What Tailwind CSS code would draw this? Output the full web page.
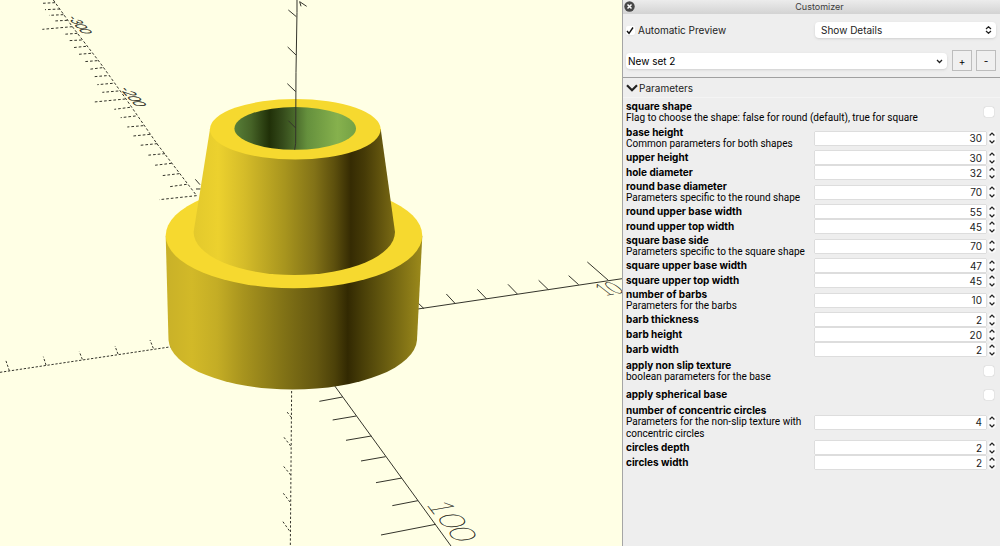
<!DOCTYPE html>
<html lang="en">
<head>
  <meta charset="UTF-8" />
  <meta name="viewport" content="width=device-width, initial-scale=1.0" />
  <title>Customizer</title>
  <script src="https://cdn.jsdelivr.net/npm/@tailwindcss/browser@4"></script>
</head>
<body class="flex h-screen overflow-hidden bg-[#ffffe5] font-[Inter,sans-serif] text-[10px] leading-[12px] text-[#1c1c1c]">

  <!-- 3D VIEW -->
  <main class="min-w-0 flex-1 bg-[#ffffe5]">
    <svg class="block h-full w-full" viewBox="0 0 622 546" preserveAspectRatio="xMidYMid slice" role="img" aria-label="3D preview">
      <defs>
        <linearGradient id="base" gradientUnits="userSpaceOnUse" x1="166" y1="0" x2="422" y2="0">
          <stop offset="0" stop-color="#c9b128" />
          <stop offset=".1" stop-color="#d2b928" />
          <stop offset=".2" stop-color="#c4ad25" />
          <stop offset=".3" stop-color="#a8941e" />
          <stop offset=".46" stop-color="#817216" />
          <stop offset=".59" stop-color="#645710" />
          <stop offset=".66" stop-color="#4c4109" />
          <stop offset=".71" stop-color="#322902" />
          <stop offset=".77" stop-color="#493f08" />
          <stop offset=".85" stop-color="#65590f" />
          <stop offset="1" stop-color="#9c8a1b" />
        </linearGradient>
        <linearGradient id="cone" gradientUnits="userSpaceOnUse" x1="194" y1="0" x2="395" y2="0">
          <stop offset="0" stop-color="#e3c92c" />
          <stop offset=".12" stop-color="#ecd12e" />
          <stop offset=".25" stop-color="#d5bc29" />
          <stop offset=".45" stop-color="#a8951e" />
          <stop offset=".6" stop-color="#827217" />
          <stop offset=".7" stop-color="#5c4f0d" />
          <stop offset=".78" stop-color="#352b03" />
          <stop offset=".85" stop-color="#463b07" />
          <stop offset="1" stop-color="#7b6b14" />
        </linearGradient>
        <linearGradient id="hole" gradientUnits="userSpaceOnUse" x1="234" y1="0" x2="356" y2="0">
          <stop offset="0" stop-color="#598039" />
          <stop offset=".14" stop-color="#466327" />
          <stop offset=".29" stop-color="#203008" />
          <stop offset=".4" stop-color="#354b1b" />
          <stop offset=".5" stop-color="#4a6a2b" />
          <stop offset=".6" stop-color="#65903d" />
          <stop offset=".85" stop-color="#86b14d" />
          <stop offset="1" stop-color="#74a145" />
        </linearGradient>
      </defs>

      <!-- axes behind the part -->
      <g fill="none" stroke="#33332a" stroke-width="3">
        <g transform="translate(40 0) scale(.3333)" stroke-dasharray="8 6">
          <path d="M40 0L97 80L183 192L258 297L350 430L470 587" />
          <path d="M45 8L5 10M60 27L15 29M70 44L27 46M82 61L42 63M97 80L7 88M112 100L70 103M125 120L85 122M138 139L98 143M153 160L115 163M172 182L132 185M187 203L147 208M200 227L163 230M218 250L172 254M235 273L187 277M256 297L163 306M270 322L223 328M287 348L242 353M310 377L262 381M330 403L280 408M352 431L300 436M375 461L320 466M395 490L343 496M418 521L366 527M440 553L390 560M470 587L358 599" />
          <path d="M466 538L480 554M468 567H482" stroke-dasharray="none" />
        </g>
        <g transform="translate(0 330) scale(.3333)" stroke-dasharray="7 5">
          <path d="M0 127L515 50M28 122L17 90M138 105L130 80M247 88L238 65M354 72L345 48M460 55L450 30" />
        </g>
        <g transform="translate(400 250) scale(.3333)">
          <path d="M40 179L667 86M72 176L50 155M165 160L139 132M260 147L232 118M352 132L324 103M445 119L416 91M536 104L506 77M625 91L562 36" />
        </g>
        <g transform="translate(270 380) scale(.3333)">
          <path d="M65 20L61 498M64 112L48 92M62 198L42 172M62 285L40 258M60 366L40 340M58 452L38 424" stroke-dasharray="7 6" />
          <path d="M190 12L543 498M218 51L148 64M259 108L188 120M304 168L228 181M347 230L273 243M396 294L318 308M444 362L367 377M497 433L333 465" />
        </g>
      </g>

      <!-- axis labels -->
      <g class="font-[Lato,sans-serif]" fill="#33332a" stroke="#33332a" stroke-width=".4" text-anchor="middle">
        <text font-size="29" y="10" class="font-thin" transform="translate(452 521) rotate(52) skewX(-28)">100</text>
        <text font-size="18" y="6" class="font-thin" transform="translate(609 289) rotate(-10) skewX(42)">10</text>
        <text font-size="12" y="5" class="font-light" transform="translate(134 97) rotate(47) skewX(-42)">-200</text>
        <text font-size="11" y="4" class="font-light" transform="translate(80 25) rotate(47) skewX(-42)">-300</text>
      </g>

      <!-- part -->
      <path d="M165.700 236L168.500 340A124.300 51 0 0 0 417 340L422.300 236Z" fill="url(#base)" />
      <ellipse cx="294" cy="235.500" rx="128.300" ry="52.700" fill="#f6d92f" />
      <path d="M210 129L193.600 232A100.700 43 0 0 0 395 232L380.700 129Z" fill="url(#cone)" />
      <ellipse cx="295.300" cy="129.300" rx="85.400" ry="30.300" fill="#f6d92f" />
      <ellipse cx="295.200" cy="128.400" rx="60.800" ry="21.400" fill="url(#hole)" />

      <!-- z axis in front -->
      <g transform="translate(260 0) scale(.3333)" fill="none" stroke="#33332a" stroke-width="3">
        <path d="M111 0V37L108 218L107 430L104 449M109 50L85 30M108 165L83 141M107 275L82 251M107 384L85 362M140 19L119 5M119 5L123 19" />
      </g>
    </svg>
  </main>

  <!-- CUSTOMIZER -->
  <aside class="flex w-[378px] shrink-0 flex-col border-l border-[#a5a5a5] bg-[#eeeeee]">
    <header class="relative flex h-[14px] items-center justify-center bg-linear-to-b from-[#ececec] to-[#d3d3d3]">
      <button aria-label="Close" class="absolute left-px top-px">
        <svg class="block size-[11px]" viewBox="0 0 11 11"><circle cx="5.500" cy="5.500" r="5.200" fill="#484848" /><path d="M3.500 3.500l4 4M7.500 3.500l-4 4" stroke="#fff" stroke-width="1.500" /></svg>
      </button>
      <h1 class="ml-4 text-[9px] text-[#3c3c3c]">Customizer</h1>
    </header>

    <div class="flex flex-col gap-3 border-b border-[#a0a0a0] pt-2 pb-[6px] pl-[3px] pr-1">
      <div class="flex items-center justify-between">
        <label class="flex items-center gap-[3px]">
          <span class="relative">
            <input type="checkbox" checked class="peer block size-[9px] appearance-none rounded-xs bg-white shadow-xs" />
            <svg class="pointer-events-none absolute inset-0 hidden size-[9px] peer-checked:block" viewBox="0 0 9 9"><path d="M1 5l2 2.300L7 1.500" fill="none" stroke="#111" stroke-width="1.400" /></svg>
          </span>
          Automatic Preview
        </label>
        <div class="relative w-[181px]">
          <select aria-label="Detail level" class="block h-4 w-full appearance-none rounded-sm bg-white pl-[6px] shadow-sm">
            <option>Show Details</option>
          </select>
          <svg class="pointer-events-none absolute right-1 top-1 h-2 w-[7px]" viewBox="0 0 7 8"><path d="M1 3l2.500-2.300L6 3M1 5l2.500 2.300L6 5" fill="none" stroke="#222" stroke-width="1.200" /></svg>
        </div>
      </div>
      <div class="flex items-center gap-1">
        <div class="relative mr-px flex-1">
          <select aria-label="Preset" class="block h-4 w-full appearance-none rounded-sm bg-white pl-[2px] text-black shadow-sm">
            <option>New set 2</option>
          </select>
          <svg class="pointer-events-none absolute right-1 top-[6px] h-[5px] w-[7px]" viewBox="0 0 7 5"><path d="M1 1l2.500 2.500L6 1" fill="none" stroke="#222" stroke-width="1.300" /></svg>
        </div>
        <button aria-label="Add preset" class="h-[21px] w-5 border border-[#bdbdbd] bg-[#f0f0f0] text-black">+</button>
        <button aria-label="Remove preset" class="h-[21px] w-5 border border-[#bdbdbd] bg-[#f0f0f0] text-black">-</button>
      </div>
    </div>

    <button class="flex h-5 items-center gap-px border-b border-[#f4f4f4] pl-[3px] text-left">
      <svg class="h-2 w-3" viewBox="0 0 12 8"><path d="M1 1.200l5 5 5-5" fill="none" stroke="#222" stroke-width="2.200" /></svg>
      Parameters
    </button>

    <form id="params" class="text-black"></form>
  </aside>

  <script>
    const params = [
      { name: "square shape", note: "Flag to choose the shape: false for round (default), true for square", bool: true },
      { name: "base height", note: "Common parameters for both shapes", value: 30 },
      { name: "upper height", value: 30 },
      { name: "hole diameter", value: 32 },
      { name: "round base diameter", note: "Parameters specific to the round shape", value: 70 },
      { name: "round upper base width", value: 55 },
      { name: "round upper top width", value: 45 },
      { name: "square base side", note: "Parameters specific to the square shape", value: 70 },
      { name: "square upper base width", value: 47 },
      { name: "square upper top width", value: 45 },
      { name: "number of barbs", note: "Parameters for the barbs", value: 10 },
      { name: "barb thickness", value: 2 },
      { name: "barb height", value: 20 },
      { name: "barb width", value: 2 },
      { name: "apply non slip texture", note: "boolean parameters for the base", bool: true },
      { name: "apply spherical base", bool: true },
      { name: "number of concentric circles", note: "Parameters for the non-slip texture with concentric circles", value: 4 },
      { name: "circles depth", value: 2 },
      { name: "circles width", value: 2 }
    ];

    const arrow = d => `<svg class="block h-[5px] w-[6px]" viewBox="0 0 6 5"><path d="${d}" fill="none" stroke="#222" stroke-width="1.200"/></svg>`;

    document.getElementById("params").innerHTML = params.map((p, i) => {
      const note = p.note ? `<span class="block font-[Roboto,sans-serif]">${p.note}</span>` : "";
      const lead = p.note ? "leading-[12px]" : "leading-[15px]";
      const name = `<b class="block font-bold">${p.name}</b>`;
      if (p.bool) {
        return `<div class="flex items-center justify-between py-[2px] pl-[3px] pr-[6px]">
          <label for="p${i}" class="${lead}">${name}${note}</label>
          <input id="p${i}" type="checkbox" class="size-[10px] appearance-none rounded-xs bg-white shadow-[0_0_1px_#999] checked:bg-blue-500">
        </div>`;
      }
      return `<div class="flex items-center pl-[3px] pr-1">
        <label for="p${i}" class="w-[189px] shrink-0 ${lead}">${name}${note}</label>
        <input id="p${i}" type="number" value="${p.value}" class="h-[13px] min-w-0 flex-1 bg-white pr-1 text-right text-[#1c1c1c] shadow-[0_0_1px_#888] [appearance:textfield] [&::-webkit-inner-spin-button]:appearance-none">
        <span class="ml-[2px] flex h-[14px] w-2 flex-col items-center justify-between rounded-sm bg-[#fafafa] py-px">
          <button type="button" aria-label="Increase" onclick="step(${i}, 1)">${arrow("M.6 3.500L3 1l2.400 2.500")}</button>
          <button type="button" aria-label="Decrease" onclick="step(${i}, -1)">${arrow("M.6 1.500L3 4l2.400-2.500")}</button>
        </span>
      </div>`;
    }).join("");

    function step(i, by) {
      const input = document.getElementById("p" + i);
      input.value = Number(input.value) + by;
    }
  </script>
</body>
</html>
